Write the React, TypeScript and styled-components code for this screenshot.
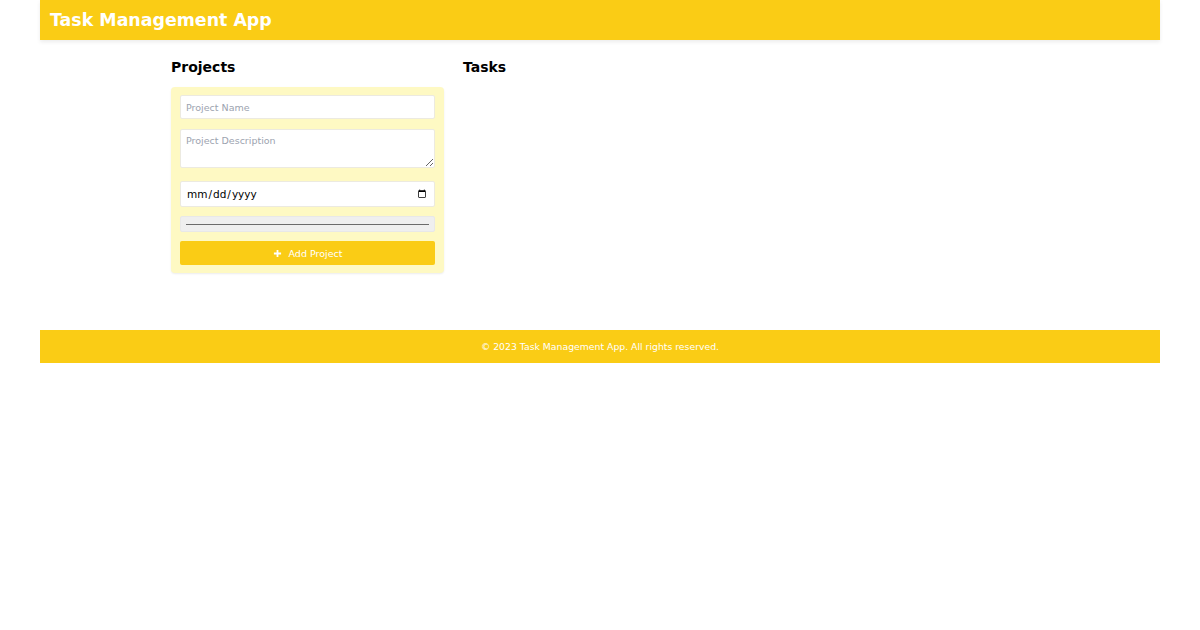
import styled, { createGlobalStyle } from "styled-components";

const GlobalStyle = createGlobalStyle`
  * { box-sizing: border-box; }
  body {
    margin: 0;
    background: #ffffff;
    font-family: "DejaVu Sans", "Noto Sans", sans-serif;
    color: #000000;
  }
`;

const Page = styled.div`
  width: 1120px;
  margin: 0 auto;
`;

const Header = styled.header`
  height: 40px;
  background: #facc15;
  padding: 0 10px;
  display: flex;
  align-items: center;
  box-shadow: 0 2px 4px rgba(0, 0, 0, 0.08);
`;

const Title = styled.h1`
  margin: 0;
  font-size: 17.4px;
  font-weight: bold;
  color: #ffffff;
`;

const Main = styled.main`
  width: 858px;
  margin: 0 auto;
  padding: 18px 0 57px;
  display: grid;
  grid-template-columns: 273px 1fr;
  column-gap: 19px;
`;

const Column = styled.section`
  display: flex;
  flex-direction: column;
`;

const Heading = styled.h2`
  margin: 0 0 11px;
  font-size: 14px;
  line-height: 18px;
  font-weight: bold;
`;

const Card = styled.form`
  background: #fef9c3;
  border-radius: 4px;
  padding: 8px 9px;
  box-shadow: 0 1px 2px rgba(0, 0, 0, 0.08);
  display: flex;
  flex-direction: column;
`;

const fieldBase = `
  width: 100%;
  border: 1px solid #eceae0;
  border-radius: 2px;
  background: #ffffff;
  font-family: "DejaVu Sans", sans-serif;
  outline: none;
  &::placeholder { color: #9ca3af; }
`;

const TextInput = styled.input`
  ${fieldBase}
  height: 24px;
  padding: 0 5px;
  font-size: 9.5px;
  margin-bottom: 10px;
`;

const TextArea = styled.textarea`
  ${fieldBase}
  display: block;
  height: 39px;
  padding: 5px;
  font-size: 9.5px;
  resize: vertical;
  margin-bottom: 13px;
`;

const DateInput = styled.input`
  ${fieldBase}
  height: 26px;
  padding: 0 5px;
  font-size: 10.5px;
  color: #000000;
  margin-bottom: 9px;
`;

const Slider = styled.div`
  height: 16px;
  background: #efefef;
  border: 1px solid #e8e8e8;
  border-radius: 2px;
  display: flex;
  align-items: center;
  padding: 0 5px;
  margin-bottom: 9px;
`;

const Track = styled.div`
  flex: 1;
  height: 1px;
  background: #6b6b6b;
`;

const Button = styled.button`
  height: 24px;
  border: none;
  border-radius: 2px;
  background: #facc15;
  color: #ffffff;
  font-family: "DejaVu Sans", sans-serif;
  font-size: 9.5px;
  display: flex;
  align-items: center;
  justify-content: center;
  gap: 7px;
  cursor: pointer;
`;

const Footer = styled.footer`
  height: 33px;
  background: #facc15;
  display: flex;
  align-items: center;
  justify-content: center;
  color: #ffffff;
  font-size: 9.3px;
`;

function PlusIcon() {
  return (
    <svg width="9" height="9" viewBox="0 0 10 10">
      <path d="M5 1v8M1 5h8" stroke="#ffffff" strokeWidth="2" />
    </svg>
  );
}

export default function App() {
  return (
    <>
      <GlobalStyle />
      <Page>
        <Header>
          <Title>Task Management App</Title>
        </Header>
        <Main>
          <Column>
            <Heading>Projects</Heading>
            <Card onSubmit={(e) => e.preventDefault()}>
              <TextInput placeholder="Project Name" />
              <TextArea placeholder="Project Description" />
              <DateInput type="date" />
              <Slider>
                <Track />
              </Slider>
              <Button type="submit">
                <PlusIcon />
                Add Project
              </Button>
            </Card>
          </Column>
          <Column>
            <Heading>Tasks</Heading>
          </Column>
        </Main>
        <Footer>© 2023 Task Management App. All rights reserved.</Footer>
      </Page>
    </>
  );
}
